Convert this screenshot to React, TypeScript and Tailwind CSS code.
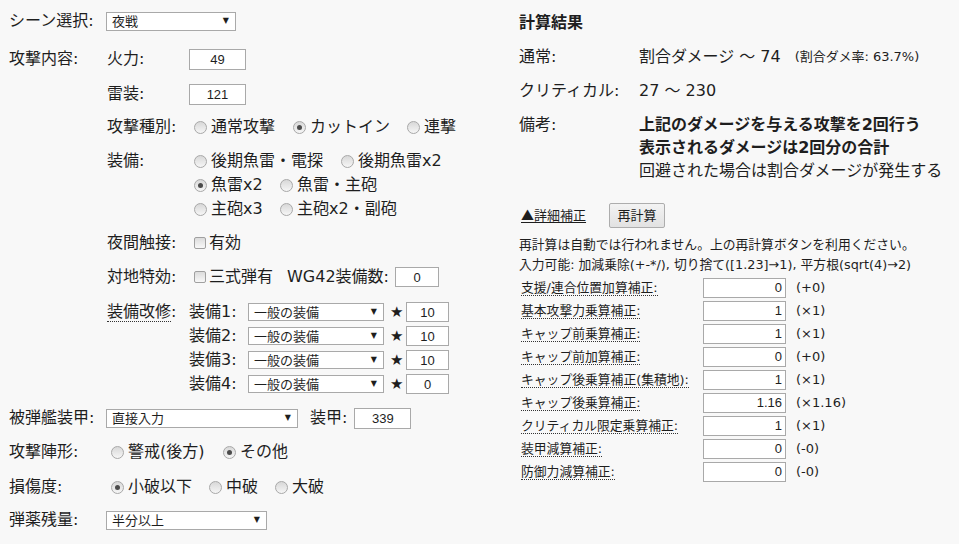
import React, { FC } from 'react';

const Radio: FC<{ checked?: boolean }> = ({ checked }) => (
  <span className="ml-[5px] mr-[4px] inline-flex h-[13px] w-[13px] shrink-0 items-center justify-center rounded-full border border-[#a8a8a8] bg-linear-to-b from-[#d8d8d8] to-[#f6f6f6]">
    {checked && <span className="h-[5px] w-[5px] rounded-full bg-[#4b4b4b]" />}
  </span>
);

const Option: FC<{ label: string; checked?: boolean; w?: string }> = ({ label, checked, w }) => (
  <span className={`inline-flex shrink-0 items-center whitespace-nowrap ${w ?? ''}`}>
    <Radio checked={checked} />
    {label}
  </span>
);

const Check: FC<{ label: string }> = ({ label }) => (
  <span className="inline-flex shrink-0 items-center whitespace-nowrap">
    <span className="ml-[5px] mr-[3px] inline-block h-[12px] w-[12px] rounded-[2px] border border-[#a0a0a0] bg-linear-to-b from-[#dcdcdc] to-[#f8f8f8]" />
    {label}
  </span>
);

const Select: FC<{ text: string; w: string; h?: string }> = ({ text, w, h }) => (
  <div
    className={`flex items-center justify-between border border-[#a9a9a9] bg-white pl-[5px] pr-[6px] text-[13px] leading-none ${w} ${h ?? 'h-[19px]'}`}
  >
    <span>{text}</span>
    <span className="text-[8px]">▼</span>
  </div>
);

const Box: FC<{ value: string; w: string; h?: string; right?: boolean }> = ({ value, w, h, right }) => (
  <div
    className={`flex items-center border border-[#a9a9a9] bg-white font-['Liberation_Sans',sans-serif] text-[13px] leading-none ${w} ${h ?? 'h-[21px]'} ${right ? 'justify-end pr-[3px]' : 'justify-center'}`}
  >
    {value}
  </div>
);

const corrections = [
  ['支援/連合位置加算補正', '0', '(+0)'],
  ['基本攻撃力乗算補正', '1', '(×1)'],
  ['キャップ前乗算補正', '1', '(×1)'],
  ['キャップ前加算補正', '0', '(+0)'],
  ['キャップ後乗算補正(集積地)', '1', '(×1)'],
  ['キャップ後乗算補正', '1.16', '(×1.16)'],
  ['クリティカル限定乗算補正', '1', '(×1)'],
  ['装甲減算補正', '0', '(-0)'],
  ['防御力減算補正', '0', '(-0)'],
];

const kaishu = [
  ['1', '10'],
  ['2', '10'],
  ['3', '10'],
  ['4', '0'],
];

export default function App() {
  return (
    <div className="flex h-[544px] w-[959px] overflow-hidden bg-[#f8f8f8] pl-[9px] font-['DejaVu_Sans','Noto_Sans_CJK_JP',sans-serif] text-[16px] text-[#1e1e1e]">
      {/* left: input form */}
      <div className="flex w-[510px] shrink-0 flex-col pt-[9px]">
        <div className="flex h-6 items-center">
          <span className="w-[97px]">シーン選択:</span>
          <Select text="夜戦" w="w-[130px]" />
        </div>

        <div className="mt-[14px] flex">
          <span className="h-6 w-[98px] leading-6">攻撃内容:</span>
          <div className="flex flex-col">
            <div className="flex h-6 items-center">
              <span className="w-[82px]">火力:</span>
              <Box value="49" w="w-[57px]" />
            </div>
            <div className="mt-[11px] flex h-6 items-center">
              <span className="w-[82px]">雷装:</span>
              <Box value="121" w="w-[57px]" />
            </div>
            <div className="mt-[9px] flex h-6 items-center">
              <span className="w-[82px]">攻撃種別:</span>
              <Option label="通常攻撃" w="w-[99px]" />
              <Option label="カットイン" checked w="w-[114px]" />
              <Option label="連撃" />
            </div>
            <div className="mt-[10px] flex">
              <span className="h-6 w-[82px] leading-6">装備:</span>
              <div className="flex flex-col">
                <div className="flex h-6 items-center">
                  <Option label="後期魚雷・電探" w="w-[147px]" />
                  <Option label="後期魚雷x2" />
                </div>
                <div className="flex h-6 items-center">
                  <Option label="魚雷x2" checked w="w-[86px]" />
                  <Option label="魚雷・主砲" />
                </div>
                <div className="flex h-6 items-center">
                  <Option label="主砲x3" w="w-[86px]" />
                  <Option label="主砲x2・副砲" />
                </div>
              </div>
            </div>
            <div className="mt-[10px] flex h-6 items-center">
              <span className="w-[82px]">夜間触接:</span>
              <Check label="有効" />
            </div>
            <div className="mt-[10px] flex h-6 items-center">
              <span className="w-[82px]">対地特効:</span>
              <Check label="三式弾有" />
              <span className="ml-[14px]">WG42装備数:</span>
              <div className="ml-[6px]">
                <Box value="0" w="w-[44px]" h="h-[20px]" />
              </div>
            </div>
            <div className="mt-[11px] flex">
              <span className="h-6 w-[82px] leading-6">
                <span className="border-b border-dotted border-[#333]">装備改修</span>:
              </span>
              <div className="flex flex-col">
                {kaishu.map(([n, star]) => (
                  <div key={n} className="flex h-6 items-center">
                    <span className="w-[59px]">装備{n}:</span>
                    <Select text="一般の装備" w="w-[136px]" h="h-[18px]" />
                    <span className="ml-[6px] w-[16px] text-[15px] leading-none">★</span>
                    <Box value={star} w="w-[43px]" h="h-[20px]" />
                  </div>
                ))}
              </div>
            </div>
          </div>
        </div>

        <div className="mt-[10px] flex h-6 items-center">
          <span className="w-[97px]">被弾艦装甲:</span>
          <Select text="直接入力" w="w-[192px]" />
          <span className="ml-[12px]">装甲:</span>
          <div className="ml-[7px]">
            <Box value="339" w="w-[57px]" />
          </div>
        </div>
        <div className="mt-[10px] flex h-6 items-center">
          <span className="w-[97px]">攻撃陣形:</span>
          <Option label="警戒(後方)" w="w-[112px]" />
          <Option label="その他" checked />
        </div>
        <div className="mt-[11px] flex h-6 items-center">
          <span className="w-[97px]">損傷度:</span>
          <Option label="小破以下" checked w="w-[98px]" />
          <Option label="中破" w="w-[66px]" />
          <Option label="大破" />
        </div>
        <div className="mt-[9px] flex h-6 items-center">
          <span className="w-[97px]">弾薬残量:</span>
          <Select text="半分以上" w="w-[161px]" />
        </div>
      </div>

      {/* right: results */}
      <div className="flex flex-1 flex-col pt-[11px]">
        <div className="h-6 font-bold leading-6">計算結果</div>
        <div className="mt-[10px] flex h-6 items-center">
          <span className="w-[120px]">通常:</span>
          <span>割合ダメージ ～ 74</span>
          <span className="ml-[14px] text-[13px]">(割合ダメ率: 63.7%)</span>
        </div>
        <div className="mt-[10px] flex h-6 items-center">
          <span className="w-[120px]">クリティカル:</span>
          <span>27 ～ 230</span>
        </div>
        <div className="mt-[10px] flex leading-[23px]">
          <span className="w-[120px]">備考:</span>
          <div className="flex flex-col">
            <span className="font-bold">上記のダメージを与える攻撃を2回行う</span>
            <span className="font-bold">表示されるダメージは2回分の合計</span>
            <span>回避された場合は割合ダメージが発生する</span>
          </div>
        </div>
        <div className="mt-[21px] flex h-[25px] items-center">
          <span className="ml-[2px] text-[13px] underline underline-offset-2">
            <span className="font-['Noto_Sans_CJK_JP',sans-serif]">▲</span>詳細補正
          </span>
          <button className="ml-[23px] h-[25px] w-[56px] rounded-[2px] border border-[#adadad] bg-linear-to-b from-[#f3f3f3] to-[#e2e2e2] text-[13px]">
            再計算
          </button>
        </div>
        <div className="mt-[7px] flex flex-col text-[12.8px] leading-[20px]">
          <span>再計算は自動では行われません。上の再計算ボタンを利用ください。</span>
          <span>入力可能: 加減乗除(+-*/), 切り捨て([1.23]→1), 平方根(sqrt(4)→2)</span>
        </div>
        <div className="mt-[1px] ml-[2px] flex flex-col">
          {corrections.map(([label, value, note]) => (
            <div key={label} className="flex h-[23px] items-center">
              <span className="w-[182px] text-[12.8px] leading-[18px]">
                <span className="border-b border-dotted border-[#333]">{label}:</span>
              </span>
              <Box value={value} w="w-[83px]" h="h-[20px]" right />
              <span className="ml-[10px] text-[13px]">{note}</span>
            </div>
          ))}
        </div>
      </div>
    </div>
  );
}
